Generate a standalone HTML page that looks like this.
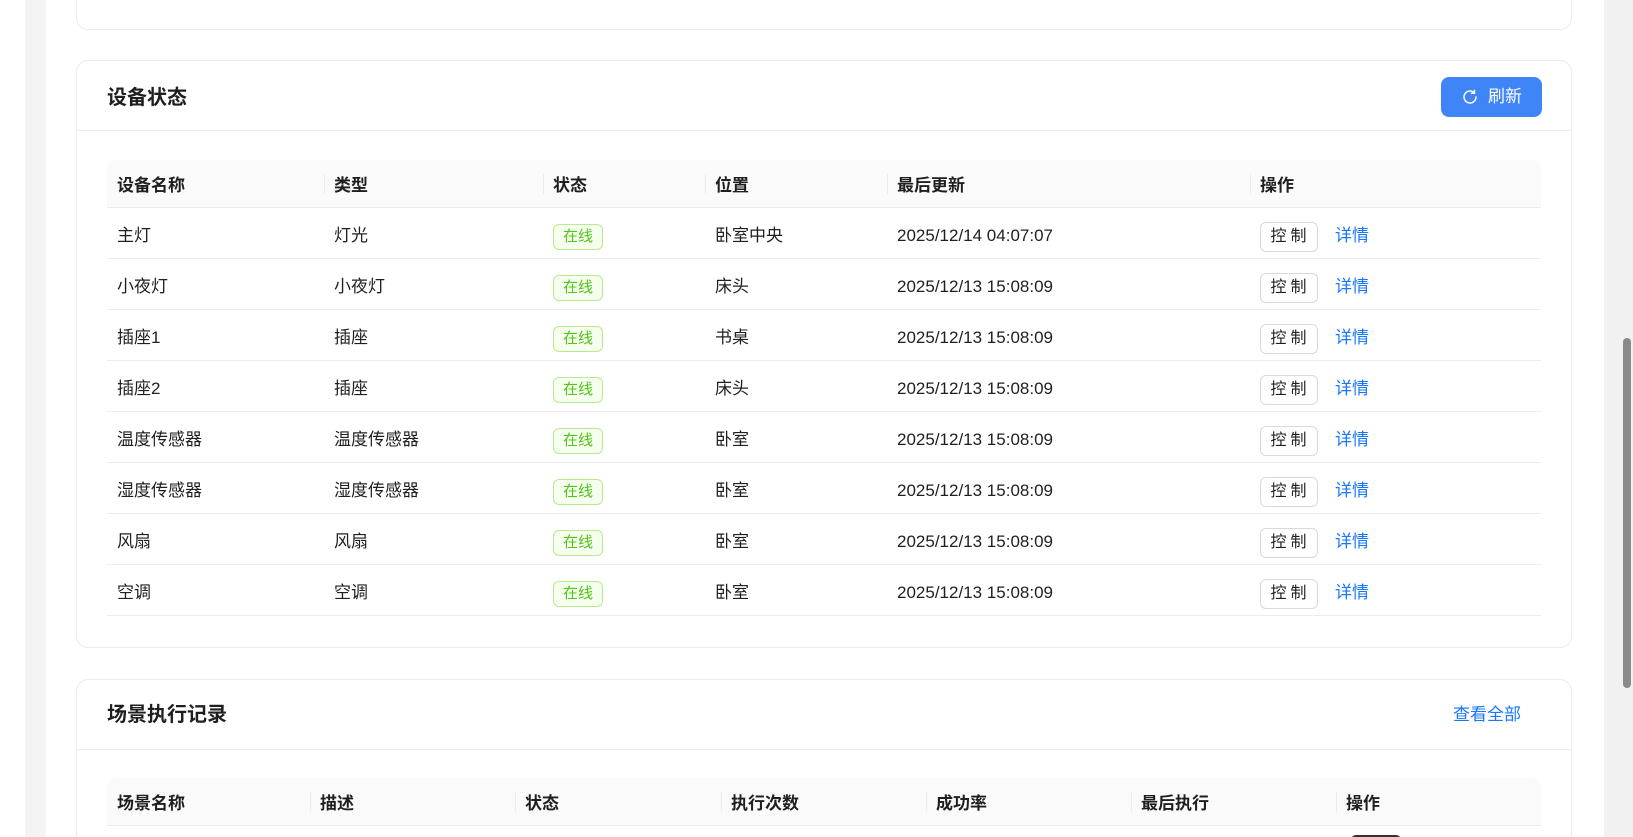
<!DOCTYPE html>
<html style="height:837px;overflow:hidden"><head><meta charset="utf-8"><style>
*{box-sizing:border-box;margin:0;padding:0}
body{width:1633px;height:837px;overflow:hidden;background:#fff;font-family:"Liberation Sans","Noto Sans CJK SC",sans-serif;color:#1f1f1f;position:relative}
.lg{position:absolute;left:25px;top:0;width:21px;height:837px;background:#f4f4f4}
.sb{position:absolute;left:1604px;top:0;width:29px;height:837px;background:#f1f1f1}
.th{position:absolute;left:1623px;top:338px;width:8px;height:350px;background:#8a8a8a;border-radius:4px}
.card{position:absolute;left:76px;width:1496px;border:1px solid #ececec;border-radius:12px;background:#fff}
.title{position:absolute;left:30px;font-size:20px;font-weight:bold;color:#1f1f1f}
.hl{position:absolute;left:0;right:0;height:1px;background:#ececec}
.tbl{position:absolute;left:30px;width:1434px}
.hd{position:relative;height:48px;background:#fafafa;border-radius:10px 10px 0 0;border-bottom:1px solid #ececec;font-weight:bold;font-size:17px}
.hd span{position:absolute;top:2px;line-height:47px;padding-left:10px}
.hd span.sep::before{content:"";position:absolute;left:0;top:12px;width:1px;height:20px;background:#ececec}
.row{position:relative;height:51px;border-bottom:1px solid #ececec;font-size:17px}
.row span{position:absolute;top:3px;line-height:50px;padding-left:10px}
.tag{display:inline-block;line-height:24px;height:26px;width:50px;text-align:center;border:1px solid #b7eb8f;background:#f6ffed;color:#52c41a;border-radius:6px;font-size:15px;vertical-align:middle;font-style:normal}
.btn{display:inline-block;height:30px;line-height:28px;width:58px;text-align:center;border:1px solid #d9d9d9;border-radius:6px;font-size:16px;letter-spacing:4px;padding-left:3px;vertical-align:middle;background:#fff;font-weight:normal}
.lnk{color:#1677ff}
.row a{margin-left:17px}
</style></head><body>
<div class="lg"></div>
<div class="card" style="top:-20px;height:50px"></div>
<div class="card" style="top:60px;height:588px">
 <div class="title" style="top:20px">设备状态</div>
 <div style="position:absolute;left:1364px;top:16px;width:101px;height:40px;background:#3f85f7;border-radius:8px;color:#fff;font-size:17px;line-height:40px">
  <svg style="position:absolute;left:20px;top:11px" width="18" height="18" viewBox="0 0 24 24" fill="none" stroke="#fff" stroke-width="2" stroke-linecap="round"><path d="M20 12a8 8 0 1 1-2.6-5.9"/><path d="M18 3v4h-4" stroke-linejoin="round"/></svg>
  <span style="position:absolute;left:47px">刷新</span></div>
 <div class="hl" style="top:69px"></div>
 <div class="tbl" style="top:99px">
  <div class="hd"><span style="left:0">设备名称</span><span class="sep" style="left:217px">类型</span><span class="sep" style="left:436px">状态</span><span class="sep" style="left:598px">位置</span><span class="sep" style="left:780px">最后更新</span><span class="sep" style="left:1143px">操作</span></div>
  <div class="row"><span style="left:0">主灯</span><span style="left:217px">灯光</span><span style="left:436px"><i class="tag">在线</i></span><span style="left:598px">卧室中央</span><span style="left:780px">2025/12/14 04:07:07</span><span style="left:1143px"><b class="btn">控制</b><a class="lnk">详情</a></span></div>
  <div class="row"><span style="left:0">小夜灯</span><span style="left:217px">小夜灯</span><span style="left:436px"><i class="tag">在线</i></span><span style="left:598px">床头</span><span style="left:780px">2025/12/13 15:08:09</span><span style="left:1143px"><b class="btn">控制</b><a class="lnk">详情</a></span></div>
  <div class="row"><span style="left:0">插座1</span><span style="left:217px">插座</span><span style="left:436px"><i class="tag">在线</i></span><span style="left:598px">书桌</span><span style="left:780px">2025/12/13 15:08:09</span><span style="left:1143px"><b class="btn">控制</b><a class="lnk">详情</a></span></div>
  <div class="row"><span style="left:0">插座2</span><span style="left:217px">插座</span><span style="left:436px"><i class="tag">在线</i></span><span style="left:598px">床头</span><span style="left:780px">2025/12/13 15:08:09</span><span style="left:1143px"><b class="btn">控制</b><a class="lnk">详情</a></span></div>
  <div class="row"><span style="left:0">温度传感器</span><span style="left:217px">温度传感器</span><span style="left:436px"><i class="tag">在线</i></span><span style="left:598px">卧室</span><span style="left:780px">2025/12/13 15:08:09</span><span style="left:1143px"><b class="btn">控制</b><a class="lnk">详情</a></span></div>
  <div class="row"><span style="left:0">湿度传感器</span><span style="left:217px">湿度传感器</span><span style="left:436px"><i class="tag">在线</i></span><span style="left:598px">卧室</span><span style="left:780px">2025/12/13 15:08:09</span><span style="left:1143px"><b class="btn">控制</b><a class="lnk">详情</a></span></div>
  <div class="row"><span style="left:0">风扇</span><span style="left:217px">风扇</span><span style="left:436px"><i class="tag">在线</i></span><span style="left:598px">卧室</span><span style="left:780px">2025/12/13 15:08:09</span><span style="left:1143px"><b class="btn">控制</b><a class="lnk">详情</a></span></div>
  <div class="row"><span style="left:0">空调</span><span style="left:217px">空调</span><span style="left:436px"><i class="tag">在线</i></span><span style="left:598px">卧室</span><span style="left:780px">2025/12/13 15:08:09</span><span style="left:1143px"><b class="btn">控制</b><a class="lnk">详情</a></span></div>
 </div>
</div>
<div class="card" style="top:679px;height:170px;border-bottom:none;border-radius:12px 12px 0 0">
 <div class="title" style="top:18px">场景执行记录</div>
 <div class="lnk" style="position:absolute;left:1376px;top:20px;font-size:17px">查看全部</div>
 <div class="hl" style="top:69px"></div>
 <div class="tbl" style="top:98px">
  <div class="hd" style="height:48px"><span style="left:0">场景名称</span><span class="sep" style="left:203px">描述</span><span class="sep" style="left:408px">状态</span><span class="sep" style="left:614px">执行次数</span><span class="sep" style="left:819px">成功率</span><span class="sep" style="left:1024px">最后执行</span><span class="sep" style="left:1229px">操作</span></div>
  <div style="position:absolute;left:1244px;top:57px;width:50px;height:10px;background:#333;border-radius:5px 5px 0 0"></div>
 </div>
</div>
<div class="sb"></div><div class="th"></div>
</body></html>
